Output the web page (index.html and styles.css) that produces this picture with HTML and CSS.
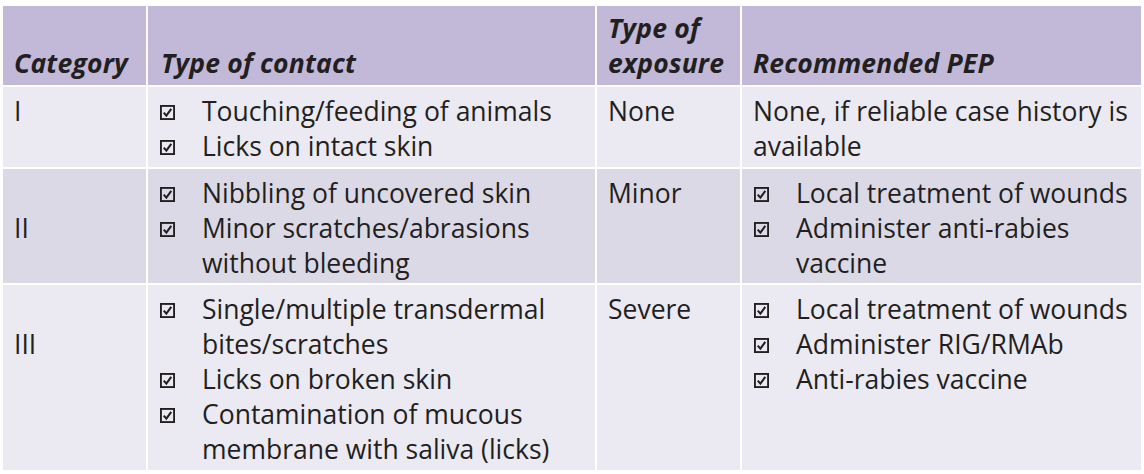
FILE: index.html
```html
<!DOCTYPE html>
<html>
<head>
<meta charset="utf-8">
<link rel="stylesheet" href="styles.css">
</head>
<body>
<div class="table">
  <div class="cell head c1"><span>Category</span></div>
  <div class="cell head c2"><span>Type of contact</span></div>
  <div class="cell head c3"><span>Type of exposure</span></div>
  <div class="cell head c4"><span>Recommended PEP</span></div>

  <div class="cell light cat">I</div>
  <div class="cell light">
    <ul class="checks">
      <li><svg class="box" viewBox="0 0 16 16"><rect x="1" y="1" width="14" height="14" fill="none" stroke="currentColor" stroke-width="2"/><path d="M4 8.2 L6.8 11.4 L12 4.2" fill="none" stroke="currentColor" stroke-width="2.2"/></svg><span>Touching/feeding of animals</span></li>
      <li><svg class="box" viewBox="0 0 16 16"><rect x="1" y="1" width="14" height="14" fill="none" stroke="currentColor" stroke-width="2"/><path d="M4 8.2 L6.8 11.4 L12 4.2" fill="none" stroke="currentColor" stroke-width="2.2"/></svg><span>Licks on intact skin</span></li>
    </ul>
  </div>
  <div class="cell light">None</div>
  <div class="cell light">None, if reliable case history is available</div>

  <div class="cell dark cat line2">II</div>
  <div class="cell dark">
    <ul class="checks">
      <li><svg class="box" viewBox="0 0 16 16"><rect x="1" y="1" width="14" height="14" fill="none" stroke="currentColor" stroke-width="2"/><path d="M4 8.2 L6.8 11.4 L12 4.2" fill="none" stroke="currentColor" stroke-width="2.2"/></svg><span>Nibbling of uncovered skin</span></li>
      <li><svg class="box" viewBox="0 0 16 16"><rect x="1" y="1" width="14" height="14" fill="none" stroke="currentColor" stroke-width="2"/><path d="M4 8.2 L6.8 11.4 L12 4.2" fill="none" stroke="currentColor" stroke-width="2.2"/></svg><span>Minor scratches/abrasions without bleeding</span></li>
    </ul>
  </div>
  <div class="cell dark">Minor</div>
  <div class="cell dark">
    <ul class="checks">
      <li><svg class="box" viewBox="0 0 16 16"><rect x="1" y="1" width="14" height="14" fill="none" stroke="currentColor" stroke-width="2"/><path d="M4 8.2 L6.8 11.4 L12 4.2" fill="none" stroke="currentColor" stroke-width="2.2"/></svg><span>Local treatment of wounds</span></li>
      <li><svg class="box" viewBox="0 0 16 16"><rect x="1" y="1" width="14" height="14" fill="none" stroke="currentColor" stroke-width="2"/><path d="M4 8.2 L6.8 11.4 L12 4.2" fill="none" stroke="currentColor" stroke-width="2.2"/></svg><span>Administer anti-rabies vaccine</span></li>
    </ul>
  </div>

  <div class="cell light cat line2">III</div>
  <div class="cell light">
    <ul class="checks">
      <li><svg class="box" viewBox="0 0 16 16"><rect x="1" y="1" width="14" height="14" fill="none" stroke="currentColor" stroke-width="2"/><path d="M4 8.2 L6.8 11.4 L12 4.2" fill="none" stroke="currentColor" stroke-width="2.2"/></svg><span>Single/multiple transdermal bites/scratches</span></li>
      <li><svg class="box" viewBox="0 0 16 16"><rect x="1" y="1" width="14" height="14" fill="none" stroke="currentColor" stroke-width="2"/><path d="M4 8.2 L6.8 11.4 L12 4.2" fill="none" stroke="currentColor" stroke-width="2.2"/></svg><span>Licks on broken skin</span></li>
      <li><svg class="box" viewBox="0 0 16 16"><rect x="1" y="1" width="14" height="14" fill="none" stroke="currentColor" stroke-width="2"/><path d="M4 8.2 L6.8 11.4 L12 4.2" fill="none" stroke="currentColor" stroke-width="2.2"/></svg><span>Contamination of mucous membrane with saliva (licks)</span></li>
    </ul>
  </div>
  <div class="cell light">Severe</div>
  <div class="cell light">
    <ul class="checks">
      <li><svg class="box" viewBox="0 0 16 16"><rect x="1" y="1" width="14" height="14" fill="none" stroke="currentColor" stroke-width="2"/><path d="M4 8.2 L6.8 11.4 L12 4.2" fill="none" stroke="currentColor" stroke-width="2.2"/></svg><span>Local treatment of wounds</span></li>
      <li><svg class="box" viewBox="0 0 16 16"><rect x="1" y="1" width="14" height="14" fill="none" stroke="currentColor" stroke-width="2"/><path d="M4 8.2 L6.8 11.4 L12 4.2" fill="none" stroke="currentColor" stroke-width="2.2"/></svg><span>Administer RIG/RMAb</span></li>
      <li><svg class="box" viewBox="0 0 16 16"><rect x="1" y="1" width="14" height="14" fill="none" stroke="currentColor" stroke-width="2"/><path d="M4 8.2 L6.8 11.4 L12 4.2" fill="none" stroke="currentColor" stroke-width="2.2"/></svg><span>Anti-rabies vaccine</span></li>
    </ul>
  </div>
</div>
</body>
</html>
```

FILE: styles.css
```css
html, body {
  margin: 0;
  padding: 0;
  background: #ffffff;
}
body {
  padding: 6px 4px 0 3px;
  font-family: "Open Sans", "Lato", sans-serif;
  font-size: 26.5px;
  line-height: 35px;
  color: #231f20;
}
.table {
  display: grid;
  grid-template-columns: 143px 447px 143px 399px;
  grid-template-rows: 79px 80px 114px 185px;
  gap: 2px;
  width: 1138px;
}
.cell {
  padding: 7px 3px 3px 11px;
  box-sizing: border-box;
}
.head {
  background: #c1b9d7;
  font-weight: 700;
  font-style: italic;
  display: flex;
  align-items: flex-end;
  padding-bottom: 4px;
  letter-spacing: 0.2px;
}
.head.c2 { padding-left: 13px; }
.light { background: #ebe9f1; }
.dark { background: #dcd9e6; }
.cat.line2 { padding-top: 42px; }
.checks {
  list-style: none;
  margin: 0;
  padding: 0;
}
.checks li {
  display: flex;
  align-items: flex-start;
}
.box {
  flex: none;
  width: 15px;
  height: 15px;
  margin: 11px 27px 0 1px;
}
```
